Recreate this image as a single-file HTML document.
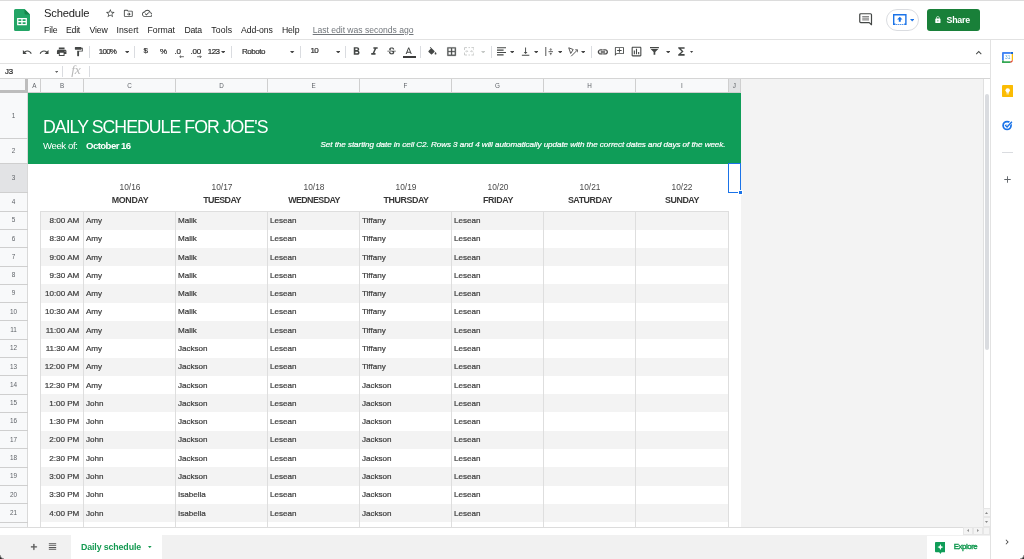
<!DOCTYPE html>
<html lang="en"><head><meta charset="utf-8"><title>Schedule - Google Sheets</title>
<style>
html,body{margin:0;padding:0;background:#fff}
body{width:1024px;height:559px;overflow:hidden;position:relative;font-family:"Liberation Sans",Arial,sans-serif}
.b{position:absolute;display:block}
.k{-webkit-text-stroke:0.2px currentColor}
.m{-webkit-text-stroke:0.4px currentColor}
.t{position:absolute;line-height:0;white-space:nowrap;display:block}
#page{position:absolute;left:0;top:0;width:1024px;height:559px;overflow:hidden;will-change:transform}
header,nav,section,main,footer,aside{display:contents}
</style></head><body><div id="page">
<header>
<div class="b" style="left:0.00px;top:0.00px;width:1024.00px;height:1.00px;background:#dcdcdc;"></div>
<svg class="b" style="left:14px;top:9px" width="16" height="22" viewBox="0 0 16 22"><path d="M1.5 0h9L16 5.5v15A1.5 1.5 0 0 1 14.5 22h-13A1.5 1.5 0 0 1 0 20.500v-19A1.5 1.500 0 0 1 1.500 0z" fill="#23a566"/><path d="M10.500 0L16 5.500h-4A1.500 1.500 0 0 1 10.500 4z" fill="#16834a"/><path d="M3.100 9.100h9.800v7.100H3.100zM4.400 10.300v1.700h2.900v-1.700zM8.600 10.300v1.700h3v-1.700zM4.400 13.300v1.700h2.900v-1.700zM8.600 13.300v1.700h3v-1.700z" fill="#fff" fill-rule="evenodd"/></svg>
<span class="t " style="top:13.32px;font-size:11.2px;color:#222;letter-spacing:-0.170px;left:44.00px;">Schedule</span>
<svg class="b" style="left:104.90px;top:8.00px;" width="10.6" height="10.6" viewBox="0 0 24 24" fill="#444746"><path d="M22 9.24l-7.19-.62L12 2 9.19 8.63 2 9.24l5.46 4.73L5.82 21 12 17.27 18.18 21l-1.63-7.03L22 9.24zM12 15.4l-3.76 2.27 1-4.28-3.32-2.88 4.38-.38L12 6.1l1.71 4.04 4.38.38-3.32 2.88 1 4.28L12 15.4z"/></svg>
<svg class="b" style="left:122.70px;top:8.20px;" width="10.6" height="10.6" viewBox="0 0 24 24" fill="#444746"><path d="M20 6h-8l-2-2H4c-1.1 0-2 .9-2 2v12c0 1.1.9 2 2 2h16c1.1 0 2-.9 2-2V8c0-1.1-.9-2-2-2zm0 12H4V6h5.17l2 2H20v10zm-7.84-1.59L13.59 17.83 17.42 14l-3.83-3.83-1.43 1.42L13.58 13H9v2h4.58z"/></svg>
<svg class="b" style="left:141.70px;top:8.30px;" width="10.6" height="10.6" viewBox="0 0 24 24" fill="#444746"><path d="M19.35 10.04C18.67 6.59 15.64 4 12 4 9.11 4 6.6 5.64 5.35 8.04 2.34 8.36 0 10.91 0 14c0 3.31 2.69 6 6 6h13c2.76 0 5-2.24 5-5 0-2.64-2.05-4.78-4.65-4.96zM19 18H6c-2.21 0-4-1.79-4-4s1.79-4 4-4h.71C7.37 7.69 9.48 6 12 6c3.04 0 5.5 2.46 5.5 5.5v.5H19c1.66 0 3 1.34 3 3s-1.34 3-3 3zm-9-3.82l-2.09-2.09L6.5 13.5 10 17l6.01-6.01-1.41-1.41z"/></svg>
<nav>
<span class="t " style="top:29.89px;font-size:8.7px;color:#222;letter-spacing:-0.175px;left:44.00px;">File</span>
<span class="t " style="top:29.89px;font-size:8.7px;color:#222;letter-spacing:-0.246px;left:66.00px;">Edit</span>
<span class="t " style="top:29.89px;font-size:8.7px;color:#222;letter-spacing:-0.072px;left:89.40px;">View</span>
<span class="t " style="top:29.89px;font-size:8.7px;color:#222;letter-spacing:0.061px;left:116.50px;">Insert</span>
<span class="t " style="top:29.89px;font-size:8.7px;color:#222;letter-spacing:-0.003px;left:147.50px;">Format</span>
<span class="t " style="top:29.89px;font-size:8.7px;color:#222;letter-spacing:-0.190px;left:184.40px;">Data</span>
<span class="t " style="top:29.89px;font-size:8.7px;color:#222;letter-spacing:0.144px;left:211.25px;">Tools</span>
<span class="t " style="top:29.89px;font-size:8.7px;color:#222;letter-spacing:-0.066px;left:241.00px;">Add-ons</span>
<span class="t " style="top:29.89px;font-size:8.7px;color:#222;letter-spacing:-0.094px;left:281.90px;">Help</span>
<span class="t " style="top:29.92px;font-size:8.6px;color:#70757a;text-decoration:underline;letter-spacing:-0.019px;left:312.70px;">Last edit was seconds ago</span>
</nav>
<svg class="b" style="left:859.400px;top:13.400px" width="13.400" height="12.800" viewBox="0 0 26.800 25.600" fill="none"><path d="M3.500 1.500h19.500a2 2 0 0 1 2 2v20l-4.500-4.300H3.500a2 2 0 0 1-2-2V3.500a2 2 0 0 1 2-2z" stroke="#444746" stroke-width="2.400" stroke-linejoin="round"/><path d="M6.500 7.200h13.500M6.500 10.500h13.500M6.500 13.800h13.500" stroke="#8a8a8a" stroke-width="2.200"/></svg>
<div class="b" style="left:886px;top:9.3px;width:32.8px;height:21.6px;border:1px solid #dadce0;border-radius:11px;box-sizing:border-box;background:#fff"></div>
<svg class="b" style="left:893.300px;top:14.300px" width="13.600" height="11.400" viewBox="0 0 27.200 22.800" fill="none" stroke="#1a73e8"><path d="M5 20.500H1.400V1.400h24.400v19.100H22.500" stroke-width="2.800"/><path d="M6.500 21h14.500" stroke-width="2.400" stroke-dasharray="2.200 1.800"/><path d="M13.600 5.600l-5.400 5.400h3.400v4.400h4v-4.400h3.400z" fill="#1a73e8" stroke="none"/></svg>
<svg class="b" style="left:910.10px;top:19.15px" width="4.4" height="2.5" viewBox="0 0 10 5" preserveAspectRatio="none" fill="#1a73e8"><path d="M0 0h10L5 5z"/></svg>
<div class="b" style="left:926.600px;top:8.800px;width:53.400px;height:22.100px;background:#198039;border-radius:3px"></div>
<svg class="b" style="left:934.20px;top:15.60px;" width="7.8" height="7.8" viewBox="0 0 24 24" fill="#fff"><path d="M18 8h-1V6c0-2.76-2.24-5-5-5S7 3.24 7 6v2H6c-1.1 0-2 .9-2 2v10c0 1.1.9 2 2 2h12c1.1 0 2-.9 2-2V10c0-1.1-.9-2-2-2zm-6 9c-1.1 0-2-.9-2-2s.9-2 2-2 2 .9 2 2-.9 2-2 2zm3.1-9H8.9V6c0-1.71 1.39-3.1 3.1-3.1 1.71 0 3.1 1.39 3.1 3.1v2z"/></svg>
<span class="t " style="top:19.85px;font-size:8.8px;color:#fff;font-weight:700;letter-spacing:-0.231px;left:946.50px;">Share</span>
<div class="b" style="left:0.00px;top:39.00px;width:1024.00px;height:1.00px;background:#e2e2e2;"></div>
</header>
<section id="toolbar">
<svg class="b" style="left:21.50px;top:46.90px;" width="10.4" height="10.4" viewBox="0 0 24 24" fill="#444746"><path d="M12.5 8c-2.65 0-5.05.99-6.9 2.6L2 7v9h9l-3.62-3.62c1.39-1.16 3.16-1.88 5.12-1.88 3.54 0 6.55 2.31 7.6 5.5l2.37-.78C21.08 11.03 17.15 8 12.5 8z"/></svg>
<svg class="b" style="left:38.60px;top:46.90px;" width="10.4" height="10.4" viewBox="0 0 24 24" fill="#444746"><path d="M18.4 10.6C16.55 8.99 14.15 8 11.5 8c-4.65 0-8.58 3.03-9.96 7.22L3.9 16c1.05-3.19 4.05-5.5 7.6-5.5 1.95 0 3.73.72 5.12 1.88L13 16h9V7l-3.6 3.6z"/></svg>
<svg class="b" style="left:55.50px;top:45.90px;" width="11.4" height="11.4" viewBox="0 0 24 24" fill="#444746"><path d="M19 8H5c-1.66 0-3 1.34-3 3v6h4v4h12v-4h4v-6c0-1.66-1.34-3-3-3zm-3 11H8v-5h8v5zm3-7c-.55 0-1-.45-1-1s.45-1 1-1 1 .45 1 1-.45 1-1 1zm-1-9H6v4h12V3z"/></svg>
<svg class="b" style="left:72.60px;top:46.00px;" width="11.2" height="11.2" viewBox="0 0 24 24" fill="#444746"><path d="M18 4V3c0-.55-.45-1-1-1H5c-.55 0-1 .45-1 1v4c0 .55.45 1 1 1h12c.55 0 1-.45 1-1V6h1v4H9v11c0 .55.45 1 1 1h2c.55 0 1-.45 1-1v-9h8V4h-3z"/></svg>
<div class="b" style="left:88.90px;top:46.00px;width:1.00px;height:11.70px;background:#dadce0;"></div>
<div class="b" style="left:133.90px;top:46.00px;width:1.00px;height:11.70px;background:#dadce0;"></div>
<div class="b" style="left:230.70px;top:46.00px;width:1.00px;height:11.70px;background:#dadce0;"></div>
<div class="b" style="left:299.70px;top:46.00px;width:1.00px;height:11.70px;background:#dadce0;"></div>
<div class="b" style="left:345.10px;top:46.00px;width:1.00px;height:11.70px;background:#dadce0;"></div>
<div class="b" style="left:420.10px;top:46.00px;width:1.00px;height:11.70px;background:#dadce0;"></div>
<div class="b" style="left:490.50px;top:46.00px;width:1.00px;height:11.70px;background:#dadce0;"></div>
<div class="b" style="left:590.70px;top:46.00px;width:1.00px;height:11.70px;background:#dadce0;"></div>
<span class="t k" style="top:51.93px;font-size:8px;color:#2a2a2a;letter-spacing:-0.742px;left:98.75px;">100%</span>
<svg class="b" style="left:124.70px;top:50.55px" width="4.4" height="2.5" viewBox="0 0 10 5" preserveAspectRatio="none" fill="#444"><path d="M0 0h10L5 5z"/></svg>
<span class="t k" style="top:51.43px;font-size:8px;color:#2a2a2a;left:143.40px;">$</span>
<span class="t k" style="top:51.73px;font-size:8px;color:#2a2a2a;letter-spacing:-1.525px;left:160.00px;">%</span>
<span class="t k" style="top:51.53px;font-size:8px;color:#2a2a2a;letter-spacing:-0.236px;left:174.40px;">.0</span>
<span class="t k" style="top:51.53px;font-size:8px;color:#2a2a2a;letter-spacing:-0.242px;left:190.60px;">.00</span>
<svg class="b" style="left:178.600px;top:55px" width="5" height="3.400" viewBox="0 0 10 7" fill="none" stroke="#444" stroke-width="1.600"><path d="M10 3.500H1.500M4 1L1.500 3.500 4 6"/></svg>
<svg class="b" style="left:197px;top:55px" width="5" height="3.400" viewBox="0 0 10 7" fill="none" stroke="#444" stroke-width="1.600"><path d="M0 3.500h8.500M6 1l2.500 2.500L6 6"/></svg>
<span class="t k" style="top:51.53px;font-size:8px;color:#2a2a2a;letter-spacing:-0.570px;left:207.75px;">123</span>
<svg class="b" style="left:220.80px;top:50.85px" width="4.4" height="2.5" viewBox="0 0 10 5" preserveAspectRatio="none" fill="#444"><path d="M0 0h10L5 5z"/></svg>
<span class="t k" style="top:51.53px;font-size:8px;color:#2a2a2a;letter-spacing:-0.449px;left:241.90px;">Roboto</span>
<svg class="b" style="left:290.20px;top:50.65px" width="4.4" height="2.5" viewBox="0 0 10 5" preserveAspectRatio="none" fill="#444"><path d="M0 0h10L5 5z"/></svg>
<span class="t k" style="top:51.43px;font-size:8px;color:#2a2a2a;letter-spacing:-0.703px;left:310.60px;">10</span>
<svg class="b" style="left:336.10px;top:50.65px" width="4.4" height="2.5" viewBox="0 0 10 5" preserveAspectRatio="none" fill="#444"><path d="M0 0h10L5 5z"/></svg>
<svg class="b" style="left:350.15px;top:45.35px;" width="12.9" height="12.9" viewBox="0 0 24 24" fill="#444746"><path d="M15.6 10.79c.97-.67 1.65-1.77 1.65-2.79 0-2.26-1.75-4-4-4H7v14h7.04c2.09 0 3.71-1.7 3.71-3.79 0-1.52-.86-2.82-2.15-3.42zM10 6.5h3c.83 0 1.5.67 1.5 1.5s-.67 1.5-1.5 1.5h-3v-3zm3.5 9H10v-3h3.5c.83 0 1.5.67 1.5 1.5s-.67 1.5-1.5 1.5z"/></svg>
<svg class="b" style="left:367.75px;top:45.35px;" width="12.9" height="12.9" viewBox="0 0 24 24" fill="#444746"><path d="M10 4v3h2.21l-3.42 8H6v3h8v-3h-2.21l3.42-8H18V4z"/></svg>
<svg class="b" style="left:385.80px;top:46.20px;" width="11.2" height="11.2" viewBox="0 0 24 24" fill="#444746"><path d="M7.24 8.75c-.26-.48-.39-1.03-.39-1.67 0-.61.13-1.16.4-1.67.26-.5.63-.93 1.11-1.29.48-.35 1.05-.63 1.7-.83.66-.19 1.39-.29 2.18-.29.81 0 1.54.11 2.21.34.66.22 1.23.54 1.69.94.47.4.83.88 1.08 1.43.25.55.38 1.15.38 1.81h-3.01c0-.31-.05-.59-.15-.85-.09-.27-.24-.49-.44-.68-.2-.19-.45-.33-.75-.44-.3-.1-.66-.16-1.06-.16-.39 0-.74.04-1.03.13-.29.09-.53.21-.72.36-.19.16-.34.34-.44.55-.1.21-.15.43-.15.66 0 .48.25.88.74 1.21.38.25.77.48 1.41.7H7.39c-.05-.08-.11-.17-.15-.25zM21 12v-2H3v2h9.62c.18.07.4.14.55.2.37.17.66.34.87.51.21.17.35.36.43.57.07.2.11.43.11.69 0 .23-.05.45-.14.66-.09.2-.23.38-.42.53-.19.15-.42.26-.71.35-.29.08-.63.13-1.01.13-.43 0-.83-.04-1.18-.13s-.66-.23-.91-.42c-.25-.19-.45-.44-.59-.75-.14-.31-.25-.76-.25-1.21H6.4c0 .55.08 1.13.24 1.58.16.45.37.85.65 1.21.28.35.6.66.98.92.37.26.78.48 1.22.65.44.17.9.3 1.38.39.48.08.96.13 1.44.13.8 0 1.53-.09 2.18-.28s1.21-.45 1.67-.79c.46-.34.82-.77 1.07-1.27s.38-1.07.38-1.71c0-.6-.1-1.14-.31-1.61-.05-.11-.11-.23-.17-.33H21z"/></svg>
<svg class="b" style="left:403.30px;top:45.60px;" width="11.4" height="11.4" viewBox="0 0 24 24" fill="#444746"><path d="M11 3L5.5 17h2.25l1.12-3h6.25l1.12 3h2.25L13 3h-2zm-1.38 9L12 5.67 14.38 12H9.62z"/></svg>
<div class="b" style="left:402.75px;top:56.40px;width:13.25px;height:2.10px;background:#3c3c3c;"></div>
<svg class="b" style="left:427.00px;top:45.50px;" width="10.8" height="10.8" viewBox="0 -2 24 24" fill="#444746"><path d="M16.56 8.94L7.62 0 6.21 1.41l2.38 2.38-5.15 5.15c-.59.59-.59 1.54 0 2.12l5.5 5.5c.29.29.68.44 1.06.44s.77-.15 1.06-.44l5.5-5.5c.59-.58.59-1.53 0-2.12zM5.21 10L10 5.21 14.79 10H5.21zM19 11.5s-2 2.17-2 3.5c0 1.1.9 2 2 2s2-.9 2-2c0-1.33-2-3.5-2-3.5zM5.210 10L10 5.210 14.790 10z"/></svg>
<svg class="b" style="left:445.50px;top:45.90px;stroke:#444746;stroke-width:0.700;" width="11.2" height="11.2" viewBox="0 0 24 24" fill="#444746"><path d="M3 3v18h18V3H3zm8 16H5v-6h6v6zm0-8H5V5h6v6zm8 8h-6v-6h6v6zm0-8h-6V5h6v6z"/></svg>
<svg class="b" style="left:464px;top:47.200px" width="10.400" height="8.600" viewBox="0 0 21 17" fill="none" stroke="#c4c7c5" stroke-width="1.800"><path d="M1 6V1h5M9 1h3M15 1h5v5M20 11v5h-5M12 16H9M6 16H1v-5" /><path d="M2.500 8.500h5M5.500 6.500l2 2-2 2M18.500 8.500h-5M15.500 6.500l-2 2 2 2" stroke-width="1.500"/></svg>
<svg class="b" style="left:480.60px;top:50.65px" width="4.4" height="2.5" viewBox="0 0 10 5" preserveAspectRatio="none" fill="#c4c7c5"><path d="M0 0h10L5 5z"/></svg>
<svg class="b" style="left:496.900px;top:47.200px" width="9.400" height="8.600" viewBox="0 0 9.400 8.600" fill="none" stroke="#444746" stroke-width="1.150"><path d="M0 .700h9.400M0 3.100h6.600M0 5.500h9.400M0 7.900h6.600"/></svg>
<svg class="b" style="left:509.90px;top:50.65px" width="4.4" height="2.5" viewBox="0 0 10 5" preserveAspectRatio="none" fill="#444"><path d="M0 0h10L5 5z"/></svg>
<svg class="b" style="left:519.60px;top:46.30px;" width="11.2" height="11.2" viewBox="0 0 24 24" fill="#444746"><path d="M16 13h-3V3h-2v10H8l4 4 4-4zM4 19v2h16v-2H4z"/></svg>
<svg class="b" style="left:533.60px;top:50.65px" width="4.4" height="2.5" viewBox="0 0 10 5" preserveAspectRatio="none" fill="#444"><path d="M0 0h10L5 5z"/></svg>
<svg class="b" style="left:544.500px;top:46.800px" width="9" height="9.400" viewBox="0 0 18 19" fill="none" stroke="#444" stroke-width="1.800"><path d="M1.500 0v19"/><path d="M7 9.500h9" /><path d="M11.500 2.500v4M9.500 4.800l2 2 2-2M11.500 16.500v-4M9.500 14.200l2-2 2 2" stroke-width="1.500"/></svg>
<svg class="b" style="left:557.50px;top:50.65px" width="4.4" height="2.5" viewBox="0 0 10 5" preserveAspectRatio="none" fill="#444"><path d="M0 0h10L5 5z"/></svg>
<svg class="b" style="left:568px;top:46.500px" width="10.400" height="10" viewBox="0 0 21 20" fill="none" stroke="#444" stroke-width="1.800"><path d="M1.500 1.500l9 3.500-5 8z" stroke-linejoin="round"/><path d="M6.500 18.500L19 6"/><path d="M14.500 5.500H19.500V10.500" stroke-width="1.600"/></svg>
<svg class="b" style="left:581.00px;top:50.65px" width="4.4" height="2.5" viewBox="0 0 10 5" preserveAspectRatio="none" fill="#444"><path d="M0 0h10L5 5z"/></svg>
<svg class="b" style="left:596.70px;top:45.90px;stroke:#3c3c3c;stroke-width:0.700;" width="11.8" height="11.8" viewBox="0 0 24 24" fill="#3c3c3c"><path d="M3.9 12c0-1.71 1.39-3.1 3.1-3.1h4V7H7c-2.76 0-5 2.24-5 5s2.24 5 5 5h4v-1.9H7c-1.71 0-3.1-1.39-3.1-3.1zM8 13h8v-2H8v2zm9-6h-4v1.9h4c1.71 0 3.1 1.39 3.1 3.1s-1.39 3.1-3.1 3.1h-4V17h4c2.76 0 5-2.24 5-5s-2.24-5-5-5z"/></svg>
<svg class="b" style="left:614.10px;top:46.30px;transform:scaleX(-1);" width="10.8" height="10.8" viewBox="0 0 24 24" fill="#444746"><path d="M22 4c0-1.1-.9-2-2-2H4c-1.1 0-2 .9-2 2v12c0 1.1.9 2 2 2h14l4 4V4zm-2 13.17L18.83 16H4V4h16v13.17zM13 5h-2v4H7v2h4v4h2v-4h4V9h-4z"/></svg>
<svg class="b" style="left:630.40px;top:45.20px;" width="13" height="13" viewBox="0 0 24 24" fill="#444746"><path d="M19 3H5c-1.1 0-2 .9-2 2v14c0 1.1.9 2 2 2h14c1.1 0 2-.9 2-2V5c0-1.1-.9-2-2-2zm0 16H5V5h14v14zM7 10h2v7H7zm4-3h2v10h-2zm4 6h2v4h-2z"/></svg>
<svg class="b" style="left:650.200px;top:47.400px" width="8.900" height="7.800" viewBox="0 0 8.900 7.800" fill="#444746"><path d="M0 0h8.900v1.300H0zM.600 2h7.700L5.300 5v2.800H3.600V5z"/></svg>
<svg class="b" style="left:665.70px;top:50.65px" width="4.4" height="2.5" viewBox="0 0 10 5" preserveAspectRatio="none" fill="#444"><path d="M0 0h10L5 5z"/></svg>
<svg class="b" style="left:675.00px;top:45.40px;" width="12.8" height="12.8" viewBox="0 0 24 24" fill="#444746"><path d="M18 4H6v2l6.5 6L6 18v2h12v-3h-7l5-5-5-5h7z"/></svg>
<svg class="b" style="left:690.40px;top:51.35px" width="3.2" height="1.9000000000000001" viewBox="0 0 10 5" preserveAspectRatio="none" fill="#444"><path d="M0 0h10L5 5z"/></svg>
<svg class="b" style="left:973.25px;top:46.55px;" width="11.5" height="11.5" viewBox="0 0 24 24" fill="#444746"><path d="M12 8l-6 6 1.41 1.41L12 10.83l4.59 4.58L18 14z"/></svg>
<div class="b" style="left:0.00px;top:63.00px;width:990.00px;height:1.00px;background:#e2e2e2;"></div>
</section>
<section id="formula">
<span class="t k" style="top:71.80px;font-size:7.8px;color:#222;letter-spacing:-0.025px;left:5.00px;">J3</span>
<svg class="b" style="left:54.60px;top:70.65px" width="3.2" height="1.9000000000000001" viewBox="0 0 10 5" preserveAspectRatio="none" fill="#666"><path d="M0 0h10L5 5z"/></svg>
<div class="b" style="left:62.00px;top:66.00px;width:1.00px;height:10.50px;background:#dadce0;"></div>
<span class="t" style="left:71.200px;top:70.400px;font-size:13.500px;color:#b8b8b8;font-style:italic;font-family:'Liberation Serif',serif;letter-spacing:-0.300px">fx</span>
<div class="b" style="left:89.00px;top:66.00px;width:1.00px;height:10.50px;background:#dadce0;"></div>
<div class="b" style="left:0.00px;top:78.00px;width:990.00px;height:1.00px;background:#d5d5d5;"></div>
</section>
<main>
<div class="b" style="left:0.00px;top:79.00px;width:983.00px;height:448.50px;background:#f3f3f3;"></div>
<div class="b" style="left:0.00px;top:79.00px;width:740.70px;height:14.00px;background:#f8f9fa;"></div>
<div class="b" style="left:728.50px;top:79.00px;width:12.00px;height:14.00px;background:#e2e3e5;"></div>
<div class="b" style="left:40.00px;top:79.00px;width:1.00px;height:14.00px;background:#cfcfcf;"></div>
<span class="t " style="top:85.92px;font-size:6.3px;color:#5f6368;left:-65.75px;width:200px;text-align:center;">A</span>
<div class="b" style="left:83.00px;top:79.00px;width:1.00px;height:14.00px;background:#cfcfcf;"></div>
<span class="t " style="top:85.92px;font-size:6.3px;color:#5f6368;left:-38.00px;width:200px;text-align:center;">B</span>
<div class="b" style="left:175.00px;top:79.00px;width:1.00px;height:14.00px;background:#cfcfcf;"></div>
<span class="t " style="top:85.92px;font-size:6.3px;color:#5f6368;left:29.50px;width:200px;text-align:center;">C</span>
<div class="b" style="left:267.00px;top:79.00px;width:1.00px;height:14.00px;background:#cfcfcf;"></div>
<span class="t " style="top:85.92px;font-size:6.3px;color:#5f6368;left:121.50px;width:200px;text-align:center;">D</span>
<div class="b" style="left:359.00px;top:79.00px;width:1.00px;height:14.00px;background:#cfcfcf;"></div>
<span class="t " style="top:85.92px;font-size:6.3px;color:#5f6368;left:213.50px;width:200px;text-align:center;">E</span>
<div class="b" style="left:451.00px;top:79.00px;width:1.00px;height:14.00px;background:#cfcfcf;"></div>
<span class="t " style="top:85.92px;font-size:6.3px;color:#5f6368;left:305.50px;width:200px;text-align:center;">F</span>
<div class="b" style="left:543.00px;top:79.00px;width:1.00px;height:14.00px;background:#cfcfcf;"></div>
<span class="t " style="top:85.92px;font-size:6.3px;color:#5f6368;left:397.50px;width:200px;text-align:center;">G</span>
<div class="b" style="left:635.00px;top:79.00px;width:1.00px;height:14.00px;background:#cfcfcf;"></div>
<span class="t " style="top:85.92px;font-size:6.3px;color:#5f6368;left:489.50px;width:200px;text-align:center;">H</span>
<div class="b" style="left:727.50px;top:79.00px;width:1.00px;height:14.00px;background:#cfcfcf;"></div>
<span class="t " style="top:85.92px;font-size:6.3px;color:#5f6368;left:581.75px;width:200px;text-align:center;">I</span>
<div class="b" style="left:740.20px;top:79.00px;width:1.00px;height:14.00px;background:#cfcfcf;"></div>
<span class="t " style="top:85.92px;font-size:6.3px;color:#5f6368;left:634.35px;width:200px;text-align:center;">J</span>
<div class="b" style="left:28.00px;top:92.40px;width:713.00px;height:0.80px;background:#cfcfcf;"></div>
<div class="b" style="left:25.00px;top:79.00px;width:2.80px;height:14.00px;background:#bdbdbd;"></div>
<div class="b" style="left:0.00px;top:90.30px;width:27.80px;height:2.80px;background:#bdbdbd;"></div>
<div class="b" style="left:0.00px;top:93.00px;width:27.50px;height:434.50px;background:#f8f9fa;"></div>
<div class="b" style="left:0.00px;top:163.50px;width:27.50px;height:29.00px;background:#e2e3e5;"></div>
<div class="b" style="left:27.00px;top:93.00px;width:1.00px;height:434.50px;background:#d9d9d9;"></div>
<div class="b" style="left:0.00px;top:137.90px;width:27.50px;height:1.00px;background:#cfcfcf;"></div>
<span class="t " style="top:115.58px;font-size:6.4px;color:#5f6368;left:-86.40px;width:200px;text-align:center;">1</span>
<div class="b" style="left:0.00px;top:163.00px;width:27.50px;height:1.00px;background:#cfcfcf;"></div>
<span class="t " style="top:150.83px;font-size:6.4px;color:#5f6368;left:-86.40px;width:200px;text-align:center;">2</span>
<div class="b" style="left:0.00px;top:192.10px;width:27.50px;height:1.00px;background:#cfcfcf;"></div>
<span class="t " style="top:177.93px;font-size:6.4px;color:#5f6368;left:-86.40px;width:200px;text-align:center;">3</span>
<div class="b" style="left:0.00px;top:210.70px;width:27.50px;height:1.00px;background:#cfcfcf;"></div>
<span class="t " style="top:201.78px;font-size:6.4px;color:#5f6368;left:-86.40px;width:200px;text-align:center;">4</span>
<div class="b" style="left:0.00px;top:228.99px;width:27.50px;height:1.00px;background:#cfcfcf;"></div>
<span class="t " style="top:220.23px;font-size:6.4px;color:#5f6368;left:-86.40px;width:200px;text-align:center;">5</span>
<div class="b" style="left:0.00px;top:247.27px;width:27.50px;height:1.00px;background:#cfcfcf;"></div>
<span class="t " style="top:238.51px;font-size:6.4px;color:#5f6368;left:-86.40px;width:200px;text-align:center;">6</span>
<div class="b" style="left:0.00px;top:265.56px;width:27.50px;height:1.00px;background:#cfcfcf;"></div>
<span class="t " style="top:256.80px;font-size:6.4px;color:#5f6368;left:-86.40px;width:200px;text-align:center;">7</span>
<div class="b" style="left:0.00px;top:283.84px;width:27.50px;height:1.00px;background:#cfcfcf;"></div>
<span class="t " style="top:275.08px;font-size:6.4px;color:#5f6368;left:-86.40px;width:200px;text-align:center;">8</span>
<div class="b" style="left:0.00px;top:302.13px;width:27.50px;height:1.00px;background:#cfcfcf;"></div>
<span class="t " style="top:293.37px;font-size:6.4px;color:#5f6368;left:-86.40px;width:200px;text-align:center;">9</span>
<div class="b" style="left:0.00px;top:320.42px;width:27.50px;height:1.00px;background:#cfcfcf;"></div>
<span class="t " style="top:311.66px;font-size:6.4px;color:#5f6368;left:-86.40px;width:200px;text-align:center;">10</span>
<div class="b" style="left:0.00px;top:338.70px;width:27.50px;height:1.00px;background:#cfcfcf;"></div>
<span class="t " style="top:329.94px;font-size:6.4px;color:#5f6368;left:-86.40px;width:200px;text-align:center;">11</span>
<div class="b" style="left:0.00px;top:356.99px;width:27.50px;height:1.00px;background:#cfcfcf;"></div>
<span class="t " style="top:348.23px;font-size:6.4px;color:#5f6368;left:-86.40px;width:200px;text-align:center;">12</span>
<div class="b" style="left:0.00px;top:375.27px;width:27.50px;height:1.00px;background:#cfcfcf;"></div>
<span class="t " style="top:366.51px;font-size:6.4px;color:#5f6368;left:-86.40px;width:200px;text-align:center;">13</span>
<div class="b" style="left:0.00px;top:393.56px;width:27.50px;height:1.00px;background:#cfcfcf;"></div>
<span class="t " style="top:384.80px;font-size:6.4px;color:#5f6368;left:-86.40px;width:200px;text-align:center;">14</span>
<div class="b" style="left:0.00px;top:411.85px;width:27.50px;height:1.00px;background:#cfcfcf;"></div>
<span class="t " style="top:403.09px;font-size:6.4px;color:#5f6368;left:-86.40px;width:200px;text-align:center;">15</span>
<div class="b" style="left:0.00px;top:430.13px;width:27.50px;height:1.00px;background:#cfcfcf;"></div>
<span class="t " style="top:421.37px;font-size:6.4px;color:#5f6368;left:-86.40px;width:200px;text-align:center;">16</span>
<div class="b" style="left:0.00px;top:448.42px;width:27.50px;height:1.00px;background:#cfcfcf;"></div>
<span class="t " style="top:439.66px;font-size:6.4px;color:#5f6368;left:-86.40px;width:200px;text-align:center;">17</span>
<div class="b" style="left:0.00px;top:466.70px;width:27.50px;height:1.00px;background:#cfcfcf;"></div>
<span class="t " style="top:457.94px;font-size:6.4px;color:#5f6368;left:-86.40px;width:200px;text-align:center;">18</span>
<div class="b" style="left:0.00px;top:484.99px;width:27.50px;height:1.00px;background:#cfcfcf;"></div>
<span class="t " style="top:476.23px;font-size:6.4px;color:#5f6368;left:-86.40px;width:200px;text-align:center;">19</span>
<div class="b" style="left:0.00px;top:503.28px;width:27.50px;height:1.00px;background:#cfcfcf;"></div>
<span class="t " style="top:494.52px;font-size:6.4px;color:#5f6368;left:-86.40px;width:200px;text-align:center;">20</span>
<div class="b" style="left:0.00px;top:521.56px;width:27.50px;height:1.00px;background:#cfcfcf;"></div>
<span class="t " style="top:512.80px;font-size:6.4px;color:#5f6368;left:-86.40px;width:200px;text-align:center;">21</span>
<div class="b" style="left:28.00px;top:93.00px;width:712.70px;height:434.50px;background:#fff;"></div>
<div class="b" style="left:28.00px;top:93.00px;width:712.70px;height:70.50px;background:#0f9d58;"></div>
<span class="t " style="top:126.87px;font-size:17.7px;color:#fff;letter-spacing:-0.957px;left:43.00px;">DAILY SCHEDULE FOR JOE'S</span>
<span class="t " style="top:145.67px;font-size:9.6px;color:#fff;letter-spacing:-0.398px;left:43.00px;">Week of:</span>
<span class="t " style="top:145.67px;font-size:9.6px;color:#fff;font-weight:700;letter-spacing:-0.562px;left:86.00px;">October 16</span>
<span class="t k" style="top:145.09px;font-size:8.1px;color:#fff;font-style:italic;letter-spacing:-0.061px;left:320.50px;">Set the starting date in cell C2. Rows 3 and 4 will automatically update with the correct dates and days of the week.</span>
<span class="t " style="top:186.69px;font-size:8.4px;color:#4a4a4a;letter-spacing:0.006px;left:119.50px;">10/16</span>
<span class="t " style="top:199.82px;font-size:8.9px;color:#383838;font-weight:700;letter-spacing:-0.365px;left:111.78px;">MONDAY</span>
<span class="t " style="top:186.69px;font-size:8.4px;color:#4a4a4a;letter-spacing:0.006px;left:211.50px;">10/17</span>
<span class="t " style="top:199.82px;font-size:8.9px;color:#383838;font-weight:700;letter-spacing:-0.592px;left:203.28px;">TUESDAY</span>
<span class="t " style="top:186.69px;font-size:8.4px;color:#4a4a4a;letter-spacing:0.006px;left:303.50px;">10/18</span>
<span class="t " style="top:199.82px;font-size:8.9px;color:#383838;font-weight:700;letter-spacing:-0.577px;left:288.15px;">WEDNESDAY</span>
<span class="t " style="top:186.69px;font-size:8.4px;color:#4a4a4a;letter-spacing:0.006px;left:395.50px;">10/19</span>
<span class="t " style="top:199.82px;font-size:8.9px;color:#383838;font-weight:700;letter-spacing:-0.413px;left:383.40px;">THURSDAY</span>
<span class="t " style="top:186.69px;font-size:8.4px;color:#4a4a4a;letter-spacing:0.006px;left:487.50px;">10/20</span>
<span class="t " style="top:199.82px;font-size:8.9px;color:#383838;font-weight:700;letter-spacing:-0.378px;left:483.02px;">FRIDAY</span>
<span class="t " style="top:186.69px;font-size:8.4px;color:#4a4a4a;letter-spacing:0.006px;left:579.50px;">10/21</span>
<span class="t " style="top:199.82px;font-size:8.9px;color:#383838;font-weight:700;letter-spacing:-0.455px;left:567.90px;">SATURDAY</span>
<span class="t " style="top:186.69px;font-size:8.4px;color:#4a4a4a;letter-spacing:0.006px;left:671.50px;">10/22</span>
<span class="t " style="top:199.82px;font-size:8.9px;color:#383838;font-weight:700;letter-spacing:-0.454px;left:665.02px;">SUNDAY</span>
<div class="b" style="left:40.50px;top:211.30px;width:688.00px;height:18.29px;background:#f3f3f3;"></div>
<div class="b" style="left:40.50px;top:247.87px;width:688.00px;height:18.29px;background:#f3f3f3;"></div>
<div class="b" style="left:40.50px;top:284.43px;width:688.00px;height:18.29px;background:#f3f3f3;"></div>
<div class="b" style="left:40.50px;top:321.00px;width:688.00px;height:18.29px;background:#f3f3f3;"></div>
<div class="b" style="left:40.50px;top:357.56px;width:688.00px;height:18.29px;background:#f3f3f3;"></div>
<div class="b" style="left:40.50px;top:394.13px;width:688.00px;height:18.29px;background:#f3f3f3;"></div>
<div class="b" style="left:40.50px;top:430.70px;width:688.00px;height:18.29px;background:#f3f3f3;"></div>
<div class="b" style="left:40.50px;top:467.26px;width:688.00px;height:18.29px;background:#f3f3f3;"></div>
<div class="b" style="left:40.50px;top:503.83px;width:688.00px;height:18.29px;background:#f3f3f3;"></div>
<div class="b" style="left:40.00px;top:211.00px;width:1.00px;height:316.50px;background:#dedede;"></div>
<div class="b" style="left:83.00px;top:211.00px;width:1.00px;height:316.50px;background:#dedede;"></div>
<div class="b" style="left:175.00px;top:211.00px;width:1.00px;height:316.50px;background:#dedede;"></div>
<div class="b" style="left:267.00px;top:211.00px;width:1.00px;height:316.50px;background:#dedede;"></div>
<div class="b" style="left:359.00px;top:211.00px;width:1.00px;height:316.50px;background:#dedede;"></div>
<div class="b" style="left:451.00px;top:211.00px;width:1.00px;height:316.50px;background:#dedede;"></div>
<div class="b" style="left:543.00px;top:211.00px;width:1.00px;height:316.50px;background:#dedede;"></div>
<div class="b" style="left:635.00px;top:211.00px;width:1.00px;height:316.50px;background:#dedede;"></div>
<div class="b" style="left:727.80px;top:211.00px;width:1.00px;height:316.50px;background:#dedede;"></div>
<div class="b" style="left:40.00px;top:210.70px;width:688.80px;height:1.00px;background:#dedede;"></div>
<span class="t k" style="top:220.99px;font-size:8.1px;color:#3a3a3a;left:-120.70px;width:200px;text-align:right;">8:00 AM</span>
<span class="t k" style="top:220.99px;font-size:8.1px;color:#3a3a3a;left:85.90px;">Amy</span>
<span class="t k" style="top:220.99px;font-size:8.1px;color:#3a3a3a;left:177.90px;">Malik</span>
<span class="t k" style="top:220.99px;font-size:8.1px;color:#3a3a3a;left:269.90px;">Lesean</span>
<span class="t k" style="top:220.99px;font-size:8.1px;color:#3a3a3a;left:361.90px;">Tiffany</span>
<span class="t k" style="top:220.99px;font-size:8.1px;color:#3a3a3a;left:453.90px;">Lesean</span>
<span class="t k" style="top:239.28px;font-size:8.1px;color:#3a3a3a;left:-120.70px;width:200px;text-align:right;">8:30 AM</span>
<span class="t k" style="top:239.28px;font-size:8.1px;color:#3a3a3a;left:85.90px;">Amy</span>
<span class="t k" style="top:239.28px;font-size:8.1px;color:#3a3a3a;left:177.90px;">Malik</span>
<span class="t k" style="top:239.28px;font-size:8.1px;color:#3a3a3a;left:269.90px;">Lesean</span>
<span class="t k" style="top:239.28px;font-size:8.1px;color:#3a3a3a;left:361.90px;">Tiffany</span>
<span class="t k" style="top:239.28px;font-size:8.1px;color:#3a3a3a;left:453.90px;">Lesean</span>
<span class="t k" style="top:257.56px;font-size:8.1px;color:#3a3a3a;left:-120.70px;width:200px;text-align:right;">9:00 AM</span>
<span class="t k" style="top:257.56px;font-size:8.1px;color:#3a3a3a;left:85.90px;">Amy</span>
<span class="t k" style="top:257.56px;font-size:8.1px;color:#3a3a3a;left:177.90px;">Malik</span>
<span class="t k" style="top:257.56px;font-size:8.1px;color:#3a3a3a;left:269.90px;">Lesean</span>
<span class="t k" style="top:257.56px;font-size:8.1px;color:#3a3a3a;left:361.90px;">Tiffany</span>
<span class="t k" style="top:257.56px;font-size:8.1px;color:#3a3a3a;left:453.90px;">Lesean</span>
<span class="t k" style="top:275.84px;font-size:8.1px;color:#3a3a3a;left:-120.70px;width:200px;text-align:right;">9:30 AM</span>
<span class="t k" style="top:275.84px;font-size:8.1px;color:#3a3a3a;left:85.90px;">Amy</span>
<span class="t k" style="top:275.84px;font-size:8.1px;color:#3a3a3a;left:177.90px;">Malik</span>
<span class="t k" style="top:275.84px;font-size:8.1px;color:#3a3a3a;left:269.90px;">Lesean</span>
<span class="t k" style="top:275.84px;font-size:8.1px;color:#3a3a3a;left:361.90px;">Tiffany</span>
<span class="t k" style="top:275.84px;font-size:8.1px;color:#3a3a3a;left:453.90px;">Lesean</span>
<span class="t k" style="top:294.13px;font-size:8.1px;color:#3a3a3a;left:-120.70px;width:200px;text-align:right;">10:00 AM</span>
<span class="t k" style="top:294.13px;font-size:8.1px;color:#3a3a3a;left:85.90px;">Amy</span>
<span class="t k" style="top:294.13px;font-size:8.1px;color:#3a3a3a;left:177.90px;">Malik</span>
<span class="t k" style="top:294.13px;font-size:8.1px;color:#3a3a3a;left:269.90px;">Lesean</span>
<span class="t k" style="top:294.13px;font-size:8.1px;color:#3a3a3a;left:361.90px;">Tiffany</span>
<span class="t k" style="top:294.13px;font-size:8.1px;color:#3a3a3a;left:453.90px;">Lesean</span>
<span class="t k" style="top:312.41px;font-size:8.1px;color:#3a3a3a;left:-120.70px;width:200px;text-align:right;">10:30 AM</span>
<span class="t k" style="top:312.41px;font-size:8.1px;color:#3a3a3a;left:85.90px;">Amy</span>
<span class="t k" style="top:312.41px;font-size:8.1px;color:#3a3a3a;left:177.90px;">Malik</span>
<span class="t k" style="top:312.41px;font-size:8.1px;color:#3a3a3a;left:269.90px;">Lesean</span>
<span class="t k" style="top:312.41px;font-size:8.1px;color:#3a3a3a;left:361.90px;">Tiffany</span>
<span class="t k" style="top:312.41px;font-size:8.1px;color:#3a3a3a;left:453.90px;">Lesean</span>
<span class="t k" style="top:330.69px;font-size:8.1px;color:#3a3a3a;left:-120.70px;width:200px;text-align:right;">11:00 AM</span>
<span class="t k" style="top:330.69px;font-size:8.1px;color:#3a3a3a;left:85.90px;">Amy</span>
<span class="t k" style="top:330.69px;font-size:8.1px;color:#3a3a3a;left:177.90px;">Malik</span>
<span class="t k" style="top:330.69px;font-size:8.1px;color:#3a3a3a;left:269.90px;">Lesean</span>
<span class="t k" style="top:330.69px;font-size:8.1px;color:#3a3a3a;left:361.90px;">Tiffany</span>
<span class="t k" style="top:330.69px;font-size:8.1px;color:#3a3a3a;left:453.90px;">Lesean</span>
<span class="t k" style="top:348.97px;font-size:8.1px;color:#3a3a3a;left:-120.70px;width:200px;text-align:right;">11:30 AM</span>
<span class="t k" style="top:348.97px;font-size:8.1px;color:#3a3a3a;left:85.90px;">Amy</span>
<span class="t k" style="top:348.97px;font-size:8.1px;color:#3a3a3a;left:177.90px;">Jackson</span>
<span class="t k" style="top:348.97px;font-size:8.1px;color:#3a3a3a;left:269.90px;">Lesean</span>
<span class="t k" style="top:348.97px;font-size:8.1px;color:#3a3a3a;left:361.90px;">Tiffany</span>
<span class="t k" style="top:348.97px;font-size:8.1px;color:#3a3a3a;left:453.90px;">Lesean</span>
<span class="t k" style="top:367.26px;font-size:8.1px;color:#3a3a3a;left:-120.70px;width:200px;text-align:right;">12:00 PM</span>
<span class="t k" style="top:367.26px;font-size:8.1px;color:#3a3a3a;left:85.90px;">Amy</span>
<span class="t k" style="top:367.26px;font-size:8.1px;color:#3a3a3a;left:177.90px;">Jackson</span>
<span class="t k" style="top:367.26px;font-size:8.1px;color:#3a3a3a;left:269.90px;">Lesean</span>
<span class="t k" style="top:367.26px;font-size:8.1px;color:#3a3a3a;left:361.90px;">Tiffany</span>
<span class="t k" style="top:367.26px;font-size:8.1px;color:#3a3a3a;left:453.90px;">Lesean</span>
<span class="t k" style="top:385.54px;font-size:8.1px;color:#3a3a3a;left:-120.70px;width:200px;text-align:right;">12:30 PM</span>
<span class="t k" style="top:385.54px;font-size:8.1px;color:#3a3a3a;left:85.90px;">Amy</span>
<span class="t k" style="top:385.54px;font-size:8.1px;color:#3a3a3a;left:177.90px;">Jackson</span>
<span class="t k" style="top:385.54px;font-size:8.1px;color:#3a3a3a;left:269.90px;">Lesean</span>
<span class="t k" style="top:385.54px;font-size:8.1px;color:#3a3a3a;left:361.90px;">Jackson</span>
<span class="t k" style="top:385.54px;font-size:8.1px;color:#3a3a3a;left:453.90px;">Lesean</span>
<span class="t k" style="top:403.82px;font-size:8.1px;color:#3a3a3a;left:-120.70px;width:200px;text-align:right;">1:00 PM</span>
<span class="t k" style="top:403.82px;font-size:8.1px;color:#3a3a3a;left:85.90px;">John</span>
<span class="t k" style="top:403.82px;font-size:8.1px;color:#3a3a3a;left:177.90px;">Jackson</span>
<span class="t k" style="top:403.82px;font-size:8.1px;color:#3a3a3a;left:269.90px;">Lesean</span>
<span class="t k" style="top:403.82px;font-size:8.1px;color:#3a3a3a;left:361.90px;">Jackson</span>
<span class="t k" style="top:403.82px;font-size:8.1px;color:#3a3a3a;left:453.90px;">Lesean</span>
<span class="t k" style="top:422.11px;font-size:8.1px;color:#3a3a3a;left:-120.70px;width:200px;text-align:right;">1:30 PM</span>
<span class="t k" style="top:422.11px;font-size:8.1px;color:#3a3a3a;left:85.90px;">John</span>
<span class="t k" style="top:422.11px;font-size:8.1px;color:#3a3a3a;left:177.90px;">Jackson</span>
<span class="t k" style="top:422.11px;font-size:8.1px;color:#3a3a3a;left:269.90px;">Lesean</span>
<span class="t k" style="top:422.11px;font-size:8.1px;color:#3a3a3a;left:361.90px;">Jackson</span>
<span class="t k" style="top:422.11px;font-size:8.1px;color:#3a3a3a;left:453.90px;">Lesean</span>
<span class="t k" style="top:440.39px;font-size:8.1px;color:#3a3a3a;left:-120.70px;width:200px;text-align:right;">2:00 PM</span>
<span class="t k" style="top:440.39px;font-size:8.1px;color:#3a3a3a;left:85.90px;">John</span>
<span class="t k" style="top:440.39px;font-size:8.1px;color:#3a3a3a;left:177.90px;">Jackson</span>
<span class="t k" style="top:440.39px;font-size:8.1px;color:#3a3a3a;left:269.90px;">Lesean</span>
<span class="t k" style="top:440.39px;font-size:8.1px;color:#3a3a3a;left:361.90px;">Jackson</span>
<span class="t k" style="top:440.39px;font-size:8.1px;color:#3a3a3a;left:453.90px;">Lesean</span>
<span class="t k" style="top:458.67px;font-size:8.1px;color:#3a3a3a;left:-120.70px;width:200px;text-align:right;">2:30 PM</span>
<span class="t k" style="top:458.67px;font-size:8.1px;color:#3a3a3a;left:85.90px;">John</span>
<span class="t k" style="top:458.67px;font-size:8.1px;color:#3a3a3a;left:177.90px;">Jackson</span>
<span class="t k" style="top:458.67px;font-size:8.1px;color:#3a3a3a;left:269.90px;">Lesean</span>
<span class="t k" style="top:458.67px;font-size:8.1px;color:#3a3a3a;left:361.90px;">Jackson</span>
<span class="t k" style="top:458.67px;font-size:8.1px;color:#3a3a3a;left:453.90px;">Lesean</span>
<span class="t k" style="top:476.96px;font-size:8.1px;color:#3a3a3a;left:-120.70px;width:200px;text-align:right;">3:00 PM</span>
<span class="t k" style="top:476.96px;font-size:8.1px;color:#3a3a3a;left:85.90px;">John</span>
<span class="t k" style="top:476.96px;font-size:8.1px;color:#3a3a3a;left:177.90px;">Jackson</span>
<span class="t k" style="top:476.96px;font-size:8.1px;color:#3a3a3a;left:269.90px;">Lesean</span>
<span class="t k" style="top:476.96px;font-size:8.1px;color:#3a3a3a;left:361.90px;">Jackson</span>
<span class="t k" style="top:476.96px;font-size:8.1px;color:#3a3a3a;left:453.90px;">Lesean</span>
<span class="t k" style="top:495.24px;font-size:8.1px;color:#3a3a3a;left:-120.70px;width:200px;text-align:right;">3:30 PM</span>
<span class="t k" style="top:495.24px;font-size:8.1px;color:#3a3a3a;left:85.90px;">John</span>
<span class="t k" style="top:495.24px;font-size:8.1px;color:#3a3a3a;left:177.90px;">Isabella</span>
<span class="t k" style="top:495.24px;font-size:8.1px;color:#3a3a3a;left:269.90px;">Lesean</span>
<span class="t k" style="top:495.24px;font-size:8.1px;color:#3a3a3a;left:361.90px;">Jackson</span>
<span class="t k" style="top:495.24px;font-size:8.1px;color:#3a3a3a;left:453.90px;">Lesean</span>
<span class="t k" style="top:513.52px;font-size:8.1px;color:#3a3a3a;left:-120.70px;width:200px;text-align:right;">4:00 PM</span>
<span class="t k" style="top:513.52px;font-size:8.1px;color:#3a3a3a;left:85.90px;">John</span>
<span class="t k" style="top:513.52px;font-size:8.1px;color:#3a3a3a;left:177.90px;">Isabella</span>
<span class="t k" style="top:513.52px;font-size:8.1px;color:#3a3a3a;left:269.90px;">Lesean</span>
<span class="t k" style="top:513.52px;font-size:8.1px;color:#3a3a3a;left:361.90px;">Jackson</span>
<span class="t k" style="top:513.52px;font-size:8.1px;color:#3a3a3a;left:453.90px;">Lesean</span>
<div class="b" style="left:727.6px;top:163px;width:13.6px;height:30.2px;border:1.4px solid #1a73e8;box-sizing:border-box"></div>
<div class="b" style="left:738.40px;top:190.40px;width:4.40px;height:4.40px;background:#1a73e8;border:0.700px solid #fff;box-sizing:border-box;"></div>
<div class="b" style="left:983.00px;top:79.00px;width:7.50px;height:448.50px;background:#fff;border-left:1px solid #e0e0e0;box-sizing:border-box;"></div>
<div class="b" style="left:985.10px;top:93.70px;width:4.00px;height:256.50px;background:#dadce0;border-radius:2px;"></div>
<div class="b" style="left:983.00px;top:508.40px;width:7.50px;height:9.00px;background:#f4f4f4;border:1px solid #e6e6e6;box-sizing:border-box;"></div>
<div class="b" style="left:983.00px;top:517.20px;width:7.50px;height:9.60px;background:#f4f4f4;border:1px solid #e6e6e6;box-sizing:border-box;"></div>
<svg class="b" style="left:985.300px;top:511.700px" width="3" height="2" viewBox="0 0 10 6" fill="#888"><path d="M0 6h10L5 0z"/></svg>
<svg class="b" style="left:985.300px;top:521px" width="3" height="2" viewBox="0 0 10 6" fill="#888"><path d="M0 0h10L5 6z"/></svg>
<div class="b" style="left:0.00px;top:527.00px;width:990.50px;height:7.50px;background:#fff;border-top:1px solid #dcdcdc;box-sizing:border-box;"></div>
<div class="b" style="left:963.00px;top:527.00px;width:9.80px;height:7.50px;background:#f4f4f4;border:1px solid #e6e6e6;box-sizing:border-box;"></div>
<div class="b" style="left:972.80px;top:527.00px;width:9.80px;height:7.50px;background:#f4f4f4;border:1px solid #e6e6e6;box-sizing:border-box;"></div>
<div class="b" style="left:982.60px;top:527.00px;width:7.90px;height:7.50px;background:#f4f4f4;border:1px solid #e6e6e6;box-sizing:border-box;"></div>
<svg class="b" style="left:967px;top:529.300px" width="2" height="3" viewBox="0 0 6 10" fill="#888"><path d="M6 0v10L0 5z"/></svg>
<svg class="b" style="left:977px;top:529.300px" width="2" height="3" viewBox="0 0 6 10" fill="#888"><path d="M0 0v10l6-5z"/></svg>
</main>
<footer>
<div class="b" style="left:0.00px;top:534.50px;width:990.50px;height:24.50px;background:#f1f1f1;"></div>
<svg class="b" style="left:29.30px;top:541.50px;stroke:#4a4a4a;stroke-width:0.900;" width="9.8" height="9.8" viewBox="0 0 24 24" fill="#4a4a4a"><path d="M19 13h-6v6h-2v-6H5v-2h6V5h2v6h6v2z"/></svg>
<svg class="b" style="left:47.30px;top:541.00px;" width="11" height="11" viewBox="0 0 24 24" fill="#555"><path d="M4 15h16v-2H4v2zm0 4h16v-2H4v2zm0-8h16V9H4v2zm0-6v2h16V5H4z"/></svg>
<div class="b" style="left:71.30px;top:534.50px;width:90.70px;height:24.50px;background:#fff;"></div>
<span class="t " style="top:546.75px;font-size:8.8px;color:#159a52;font-weight:700;letter-spacing:-0.115px;left:81.00px;">Daily schedule</span>
<svg class="b" style="left:148.20px;top:545.65px" width="3.6" height="2.1" viewBox="0 0 10 5" preserveAspectRatio="none" fill="#159a52"><path d="M0 0h10L5 5z"/></svg>
<div class="b" style="left:926.80px;top:535.50px;width:63.70px;height:23.50px;background:#fff;"></div>
<svg class="b" style="left:934.600px;top:541.500px" width="10.800" height="12" viewBox="0 0 18 20"><path d="M1.500 0h15A1.500 1.500 0 0 1 18 1.500v14a1.500 1.500 0 0 1-1.500 1.500H11l-2 3-2-3H1.500A1.500 1.500 0 0 1 0 15.500v-14A1.500 1.500 0 0 1 1.500 0z" fill="#0f9d58"/><path d="M9 3.500l1.500 3.500 3.500 1.500-3.500 1.500L9 13.500 7.500 10 4 8.500 7.500 7z" fill="#fff"/></svg>
<span class="t m" style="top:547.26px;font-size:7.9px;color:#159a52;letter-spacing:-0.467px;left:953.80px;">Explore</span>
</footer>
<aside>
<div class="b" style="left:990.00px;top:40.00px;width:34.00px;height:519.00px;background:#fff;border-left:1px solid #e2e2e2;box-sizing:border-box;"></div>
<svg class="b" style="left:1002px;top:51.800px" width="11.400" height="11.400" viewBox="0 0 24 24"><path d="M2 0h16v4H4v14H0V2a2 2 0 0 1 2-2z" fill="#4285f4"/><path d="M18 0h4a2 2 0 0 1 2 2v2h-6z" fill="#1967d2"/><path d="M20 4h4v14h-4z" fill="#fbbc04"/><path d="M0 18h4v2h14v4H2a2 2 0 0 1-2-2z" fill="#34a853"/><path d="M4 18h14v2H4z" fill="#34a853"/><path d="M18 18h6l-6 6z" fill="#ea4335"/><path d="M18 18h2V4h-2z" fill="#fbbc04" opacity="0"/><rect x="4" y="4" width="16" height="15" fill="#fff"/><text x="12" y="15.500" font-size="10" font-family="Liberation Sans,sans-serif" fill="#4f9fd8" text-anchor="middle">31</text></svg>
<svg class="b" style="left:1002px;top:85.100px" width="11.400" height="12.200" viewBox="0 0 24 25.700"><rect width="24" height="25.700" rx="2.500" fill="#fbbc04"/><ellipse cx="12" cy="11.300" rx="4.700" ry="4.400" fill="#fff"/><path d="M9.300 14h5.400v2.600H9.300zM9.300 18h5.400v1.700H9.300z" fill="#fff"/></svg>
<svg class="b" style="left:1002.300px;top:120.300px" width="10.600" height="10.600" viewBox="0 0 24 24"><circle cx="11.500" cy="12.500" r="9" fill="none" stroke="#1a73e8" stroke-width="4"/><circle cx="11.500" cy="12.500" r="3" fill="#1a73e8"/><path d="M8 11.500l3.500 3.500L22 3.500" fill="none" stroke="#fff" stroke-width="6"/><path d="M7 11.500l4.500 4.500L22.500 4" fill="none" stroke="#1a73e8" stroke-width="3.200"/></svg>
<div class="b" style="left:1002.00px;top:152.00px;width:11.40px;height:0.80px;background:#dadce0;"></div>
<svg class="b" style="left:1002.00px;top:173.80px;" width="11" height="11" viewBox="0 0 24 24" fill="#5f6368"><path d="M19 13h-6v6h-2v-6H5v-2h6V5h2v6h6v2z"/></svg>
<svg class="b" style="left:1002.00px;top:537.00px;" width="10" height="10" viewBox="0 0 24 24" fill="#444"><path d="M10 6L8.59 7.41 13.17 12l-4.58 4.59L10 18l6-6z"/></svg>
</aside>
<div class="b" style="left:0;top:555px;width:4px;height:4px;background:radial-gradient(circle at 100% 0,rgba(40,40,40,0) 2.800px,rgba(40,40,40,1) 4.600px)"></div>
<div class="b" style="left:1020px;top:555px;width:4px;height:4px;background:radial-gradient(circle at 0 0,rgba(40,40,40,0) 2.800px,rgba(40,40,40,1) 4.600px)"></div>
</div></body></html>
